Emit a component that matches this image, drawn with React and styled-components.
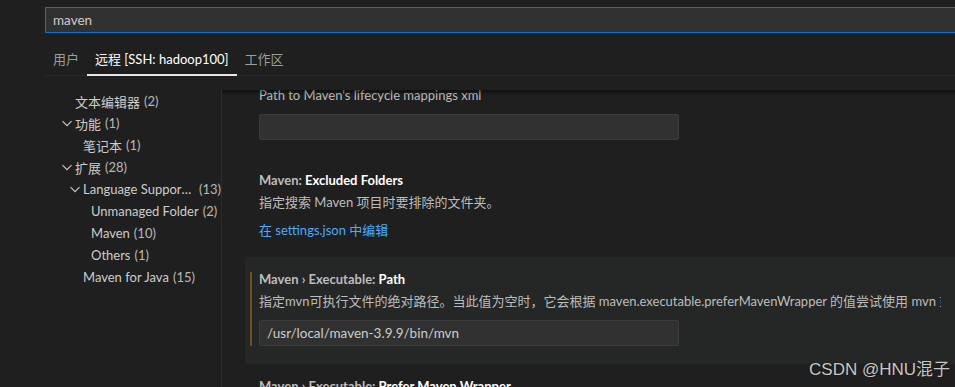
import React from "react";
import styled, { createGlobalStyle } from "styled-components";

const GlobalStyle = createGlobalStyle`
  html, body {
    margin: 0;
    padding: 0;
    background: #1f1f1f;
    overflow: hidden;
  }
  body {
    font-family: Lato, "Noto Sans CJK SC", sans-serif;
    font-size: 13px;
    color: #cccccc;
  }
`;

const tocItems = [
  { label: "文本编辑器", count: 2, level: 1 },
  { label: "功能", count: 1, level: 1, open: true },
  { label: "笔记本", count: 1, level: 2 },
  { label: "扩展", count: 28, level: 1, open: true },
  { label: "Language Support for Java(TM) by Red Hat", count: 13, level: 2, open: true },
  { label: "Unmanaged Folder", count: 2, level: 3 },
  { label: "Maven", count: 10, level: 3 },
  { label: "Others", count: 1, level: 3 },
  { label: "Maven for Java", count: 15, level: 2 },
];

function Chevron() {
  return (
    <svg width="16" height="16" viewBox="0 0 16 16">
      <path d="M3.5 6.2 L8 10.7 L12.5 6.2" fill="none" stroke="#c5c5c5" strokeWidth="1.2" />
    </svg>
  );
}

function App() {
  return (
    <React.Fragment>
      <GlobalStyle />
      <Page>
        <Header>
          <Search>maven</Search>
          <Tabs>
            <Tab>用户</Tab>
            <Tab active>远程 [SSH: hadoop100]</Tab>
            <Tab>工作区</Tab>
          </Tabs>
        </Header>

        <Body>
          <Toc>
            {tocItems.map((item) => (
              <TocRow key={item.label} level={item.level}>
                <Twistie>{item.open && <Chevron />}</Twistie>
                <TocLabel>{item.label}</TocLabel>
                <TocCount>({item.count})</TocCount>
              </TocRow>
            ))}
          </Toc>

          <Content>
            <Scroller>
              <Setting>
                <Title>
                  Java › Configuration › Maven: <b>Lifecycle Mappings</b>
                </Title>
                <Desc>Path to Maven's lifecycle mappings xml</Desc>
                <Input />
              </Setting>

              <Setting>
                <Title>
                  Maven: <b>Excluded Folders</b>
                </Title>
                <Desc>指定搜索 Maven 项目时要排除的文件夹。</Desc>
                <Link>在 settings.json 中编辑</Link>
              </Setting>

              <Setting focused modified>
                <Title>
                  Maven › Executable: <b>Path</b>
                </Title>
                <Desc>
                  指定mvn可执行文件的绝对路径。当此值为空时，它会根据 maven.executable.preferMavenWrapper 的值尝试使用 mvn 或 mvnw。
                </Desc>
                <Input>/usr/local/maven-3.9.9/bin/mvn</Input>
              </Setting>

              <Setting>
                <Title>
                  Maven › Executable: <b>Prefer Maven Wrapper</b>
                </Title>
              </Setting>
            </Scroller>
          </Content>
        </Body>

        <Watermark>CSDN @HNU混子</Watermark>
      </Page>
    </React.Fragment>
  );
}

export default App;

const Page = styled.div`
  position: relative;
  width: 955px;
  height: 387px;
  overflow: hidden;
  background: #1f1f1f;
`;

const Header = styled.div`
  padding: 7px 0 0 45px;
`;

const Search = styled.div`
  box-sizing: border-box;
  width: 1000px;
  height: 26px;
  padding: 0 7px;
  line-height: 24px;
  font-size: 13.5px;
  color: #cccccc;
  background: #313131;
  border: 1px solid #0078d4;
`;

const Tabs = styled.div`
  display: flex;
  margin-top: 7px;
  height: 35px;
  border-bottom: 1px solid #2b2b2b;
`;

const Tab = styled.div`
  padding: 4px 8px 0;
  line-height: 30px;
  font-size: 13px;
  color: ${(p) => (p.active ? "#ffffff" : "#9d9d9d")};
  border-bottom: 2px solid ${(p) => (p.active ? "#e7e7e7" : "transparent")};
  margin-bottom: -1px;
`;

const Body = styled.div`
  display: flex;
  margin-top: 14px;
  padding-left: 45px;
  height: 300px;
`;

const Toc = styled.div`
  width: 176px;
  flex: none;
  border-right: 1px solid #2b2b2b;
`;

const TocRow = styled.div`
  display: flex;
  align-items: center;
  height: 22px;
  padding-left: ${(p) => 6 + p.level * 8}px;
  color: #cccccc;
  white-space: nowrap;
`;

const Twistie = styled.span`
  display: flex;
  width: 16px;
  height: 16px;
  flex: none;
`;

const TocLabel = styled.span`
  overflow: hidden;
  text-overflow: ellipsis;
  min-width: 0;
`;

const TocCount = styled.span`
  flex: none;
  margin-left: 4px;
  color: #b8b8b8;
`;

const Content = styled.div`
  position: relative;
  flex: 1;
  overflow: hidden;

  &::before {
    content: "";
    position: absolute;
    left: 0;
    right: 0;
    top: 0;
    height: 6px;
    box-shadow: #000 0 6px 6px -6px inset;
    z-index: 2;
  }
`;

const Scroller = styled.div`
  margin-top: -39px;
  padding-left: 23px;
`;

const Setting = styled.div`
  position: relative;
  padding: 13px 14px 18px;
  white-space: nowrap;
  background: ${(p) => (p.focused ? "#252626" : "transparent")};

  &::before {
    content: "";
    display: ${(p) => (p.modified ? "block" : "none")};
    position: absolute;
    left: 5px;
    top: 15px;
    bottom: 18px;
    width: 2px;
    background: #6a5220;
  }
`;

const Title = styled.div`
  line-height: 18px;
  font-weight: 700;
  color: #bdbdbd;

  b {
    font-weight: 700;
    color: #ffffff;
  }
`;

const Desc = styled.div`
  margin-top: 4px;
  line-height: 18px;
  color: #bdbdbd;
  overflow: hidden;
`;

const Input = styled.div`
  box-sizing: border-box;
  width: 420px;
  height: 26px;
  margin-top: 10px;
  padding: 0 7px;
  line-height: 24px;
  font-size: 13.5px;
  color: #cccccc;
  background: #313131;
  border: 1px solid #3c3c3c;
  border-radius: 2px;
`;

const Link = styled.div`
  margin-top: 10px;
  line-height: 18px;
  color: #4daafc;
`;

const Watermark = styled.div`
  position: absolute;
  right: 5px;
  bottom: 7px;
  font-family: "Liberation Sans", "Noto Sans CJK SC", sans-serif;
  font-size: 17px;
  color: #c8c8c8;
  text-shadow: 0 0 1px rgba(0, 0, 0, 0.6);
`;
